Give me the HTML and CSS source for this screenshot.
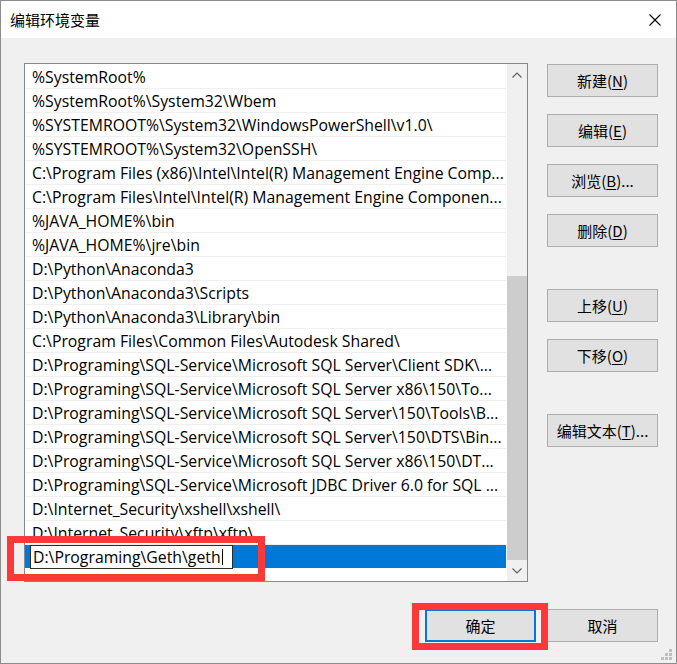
FILE: index.html
```html
<!DOCTYPE html>
<html lang="zh-CN">
  <head>
    <meta charset="UTF-8" />
    <meta name="viewport" content="width=device-width, initial-scale=1.0" />
    <title>编辑环境变量</title>
    <link rel="stylesheet" href="styles.css">
  </head>
  <body>
    <div class="window">
      <!-- Title bar -->
      <div class="titlebar">
        <span class="title">编辑环境变量</span>
        <svg class="close" width="12" height="12" viewBox="0 0 12 12">
          <path d="M0.5 0.5 L11.5 11.5 M11.5 0.5 L0.5 11.5" stroke="#000" stroke-width="1.1" fill="none" />
        </svg>
      </div>

      <div class="content">
        <div class="main">
          <!-- Path list -->
          <div class="list">
            <div class="rows">
              <div class="row">%SystemRoot%</div>
              <div class="row">%SystemRoot%\System32\Wbem</div>
              <div class="row">%SYSTEMROOT%\System32\WindowsPowerShell\v1.0\</div>
              <div class="row">%SYSTEMROOT%\System32\OpenSSH\</div>
              <div class="row">C:\Program Files (x86)\Intel\Intel(R) Management Engine Comp...</div>
              <div class="row">C:\Program Files\Intel\Intel(R) Management Engine Componen...</div>
              <div class="row">%JAVA_HOME%\bin</div>
              <div class="row">%JAVA_HOME%\jre\bin</div>
              <div class="row">D:\Python\Anaconda3</div>
              <div class="row">D:\Python\Anaconda3\Scripts</div>
              <div class="row">D:\Python\Anaconda3\Library\bin</div>
              <div class="row">C:\Program Files\Common Files\Autodesk Shared\</div>
              <div class="row">D:\Programing\SQL-Service\Microsoft SQL Server\Client SDK\...</div>
              <div class="row">D:\Programing\SQL-Service\Microsoft SQL Server x86\150\To...</div>
              <div class="row">D:\Programing\SQL-Service\Microsoft SQL Server\150\Tools\B...</div>
              <div class="row">D:\Programing\SQL-Service\Microsoft SQL Server\150\DTS\Bin...</div>
              <div class="row">D:\Programing\SQL-Service\Microsoft SQL Server x86\150\DT...</div>
              <div class="row">D:\Programing\SQL-Service\Microsoft JDBC Driver 6.0 for SQL ...</div>
              <div class="row">D:\Internet_Security\xshell\xshell\</div>
              <div class="row">D:\Internet_Security\xftp\xftp\</div>
              <div class="row selected">
                <div class="editbox"><span>D:\Programing\Geth\geth</span><span class="caret"></span></div>
              </div>
            </div>
            <div class="scrollbar">
              <div class="arrow">
                <svg width="10" height="6" viewBox="0 0 10 6">
                  <path d="M0.5 5.5 L5 1 L9.5 5.5" stroke="#606060" stroke-width="1.2" fill="none" />
                </svg>
              </div>
              <div class="track"><div class="thumb"></div></div>
              <div class="arrow down">
                <svg width="10" height="6" viewBox="0 0 10 6">
                  <path d="M0.5 0.5 L5 5 L9.5 0.5" stroke="#606060" stroke-width="1.2" fill="none" />
                </svg>
              </div>
            </div>
          </div>

          <!-- Side buttons -->
          <div class="side">
            <span class="btn">新建(<u>N</u>)</span>
            <span class="btn">编辑(<u>E</u>)</span>
            <span class="btn">浏览(<u>B</u>)...</span>
            <span class="btn">删除(<u>D</u>)</span>
            <span class="btn group">上移(<u>U</u>)</span>
            <span class="btn">下移(<u>O</u>)</span>
            <span class="btn group">编辑文本(<u>T</u>)...</span>
          </div>
        </div>

        <!-- Dialog buttons -->
        <div class="footer">
          <span class="btn default">确定</span>
          <span class="btn">取消</span>
        </div>
      </div>

      <!-- Red annotation boxes -->
      <div class="mark mark-edit"></div>
      <div class="mark mark-ok"></div>

      <svg class="grip" width="12" height="12" viewBox="0 0 12 12">
        <rect x="8" y="0" width="3" height="3" fill="#bfbfbf" />
        <rect x="4" y="4" width="3" height="3" fill="#bfbfbf" />
        <rect x="8" y="4" width="3" height="3" fill="#bfbfbf" />
        <rect x="0" y="8" width="3" height="3" fill="#bfbfbf" />
        <rect x="4" y="8" width="3" height="3" fill="#bfbfbf" />
        <rect x="8" y="8" width="3" height="3" fill="#bfbfbf" />
      </svg>
    </div>
  </body>
</html>
```

FILE: styles.css
```css
* {
  box-sizing: border-box;
}

body {
  margin: 0;
  font-family: "Open Sans", "Noto Sans CJK SC", sans-serif;
  font-size: 15.8px;
  color: #000;
}

.window {
  position: relative;
  width: 677px;
  height: 664px;
  border: 1px solid #8c8c8c;
  background: #f0f0f0;
  overflow: hidden;
}

/* Title bar */
.titlebar {
  display: flex;
  justify-content: space-between;
  align-items: center;
  height: 37px;
  padding: 0 15px 0 9px;
  background: #fff;
}

.title {
  font-family: "Noto Sans CJK SC", sans-serif;
  font-size: 15px;
}

/* Body */
.content {
  padding: 25px 18px 0 23px;
}

.main {
  display: flex;
  align-items: flex-start;
}

.list {
  display: flex;
  width: 504px;
  height: 519px;
  border: 1px solid #828790;
  background: #fff;
}

.rows {
  width: 481px;
  padding-top: 1px;
  overflow: hidden;
}

.row {
  height: 24px;
  line-height: 24px;
  padding-left: 7px;
  border-bottom: 1px solid #f0f0f0;
  white-space: nowrap;
  overflow: hidden;
}

.row.selected {
  display: flex;
  overflow: visible;
  background: #0078d7;
  border-bottom-color: #fff;
  padding-left: 5px;
}

.editbox {
  display: flex;
  align-items: center;
  width: 203px;
  height: 24px;
  padding-left: 2px;
  line-height: 22px;
  background: #fff;
  border: 1px solid #2b2b2b;
}

.caret {
  width: 1px;
  height: 16px;
  margin-left: 1px;
  background: #000;
}

/* Scrollbar */
.scrollbar {
  display: flex;
  flex-direction: column;
  width: 20px;
  margin-left: 1px;
  background: #f0f0f0;
}

.arrow {
  display: flex;
  justify-content: center;
  align-items: center;
  height: 21px;
}

.track {
  display: flex;
  flex-direction: column;
  justify-content: flex-end;
  flex: 1;
}

.thumb {
  height: 284px;
  background: #cdcdcd;
}

/* Buttons */
.side {
  display: flex;
  flex-direction: column;
  margin-left: 19px;
  padding-top: 1px;
}

.btn {
  display: flex;
  justify-content: center;
  align-items: center;
  width: 111px;
  height: 33px;
  margin-bottom: 17px;
  border: 1px solid #adadad;
  background: #e1e1e1;
  font-family: "Noto Sans CJK SC", sans-serif;
  font-size: 15px;
}

.btn u {
  text-underline-offset: 2px;
}

.side .group {
  margin-top: 25px;
}

.footer {
  display: flex;
  justify-content: flex-end;
  gap: 11px;
  margin-top: 27px;
}

.footer .btn {
  margin-bottom: 0;
}

.btn.default {
  border: 2px solid #0078d7;
}

/* Annotations */
.mark {
  position: absolute;
  border: 7px solid #fc3838;
}

.mark-edit {
  left: 6px;
  top: 535px;
  width: 258px;
  height: 45px;
}

.mark-ok {
  left: 411px;
  top: 602px;
  width: 136px;
  height: 47px;
}

.grip {
  position: absolute;
  right: 3px;
  bottom: 2px;
}
```
